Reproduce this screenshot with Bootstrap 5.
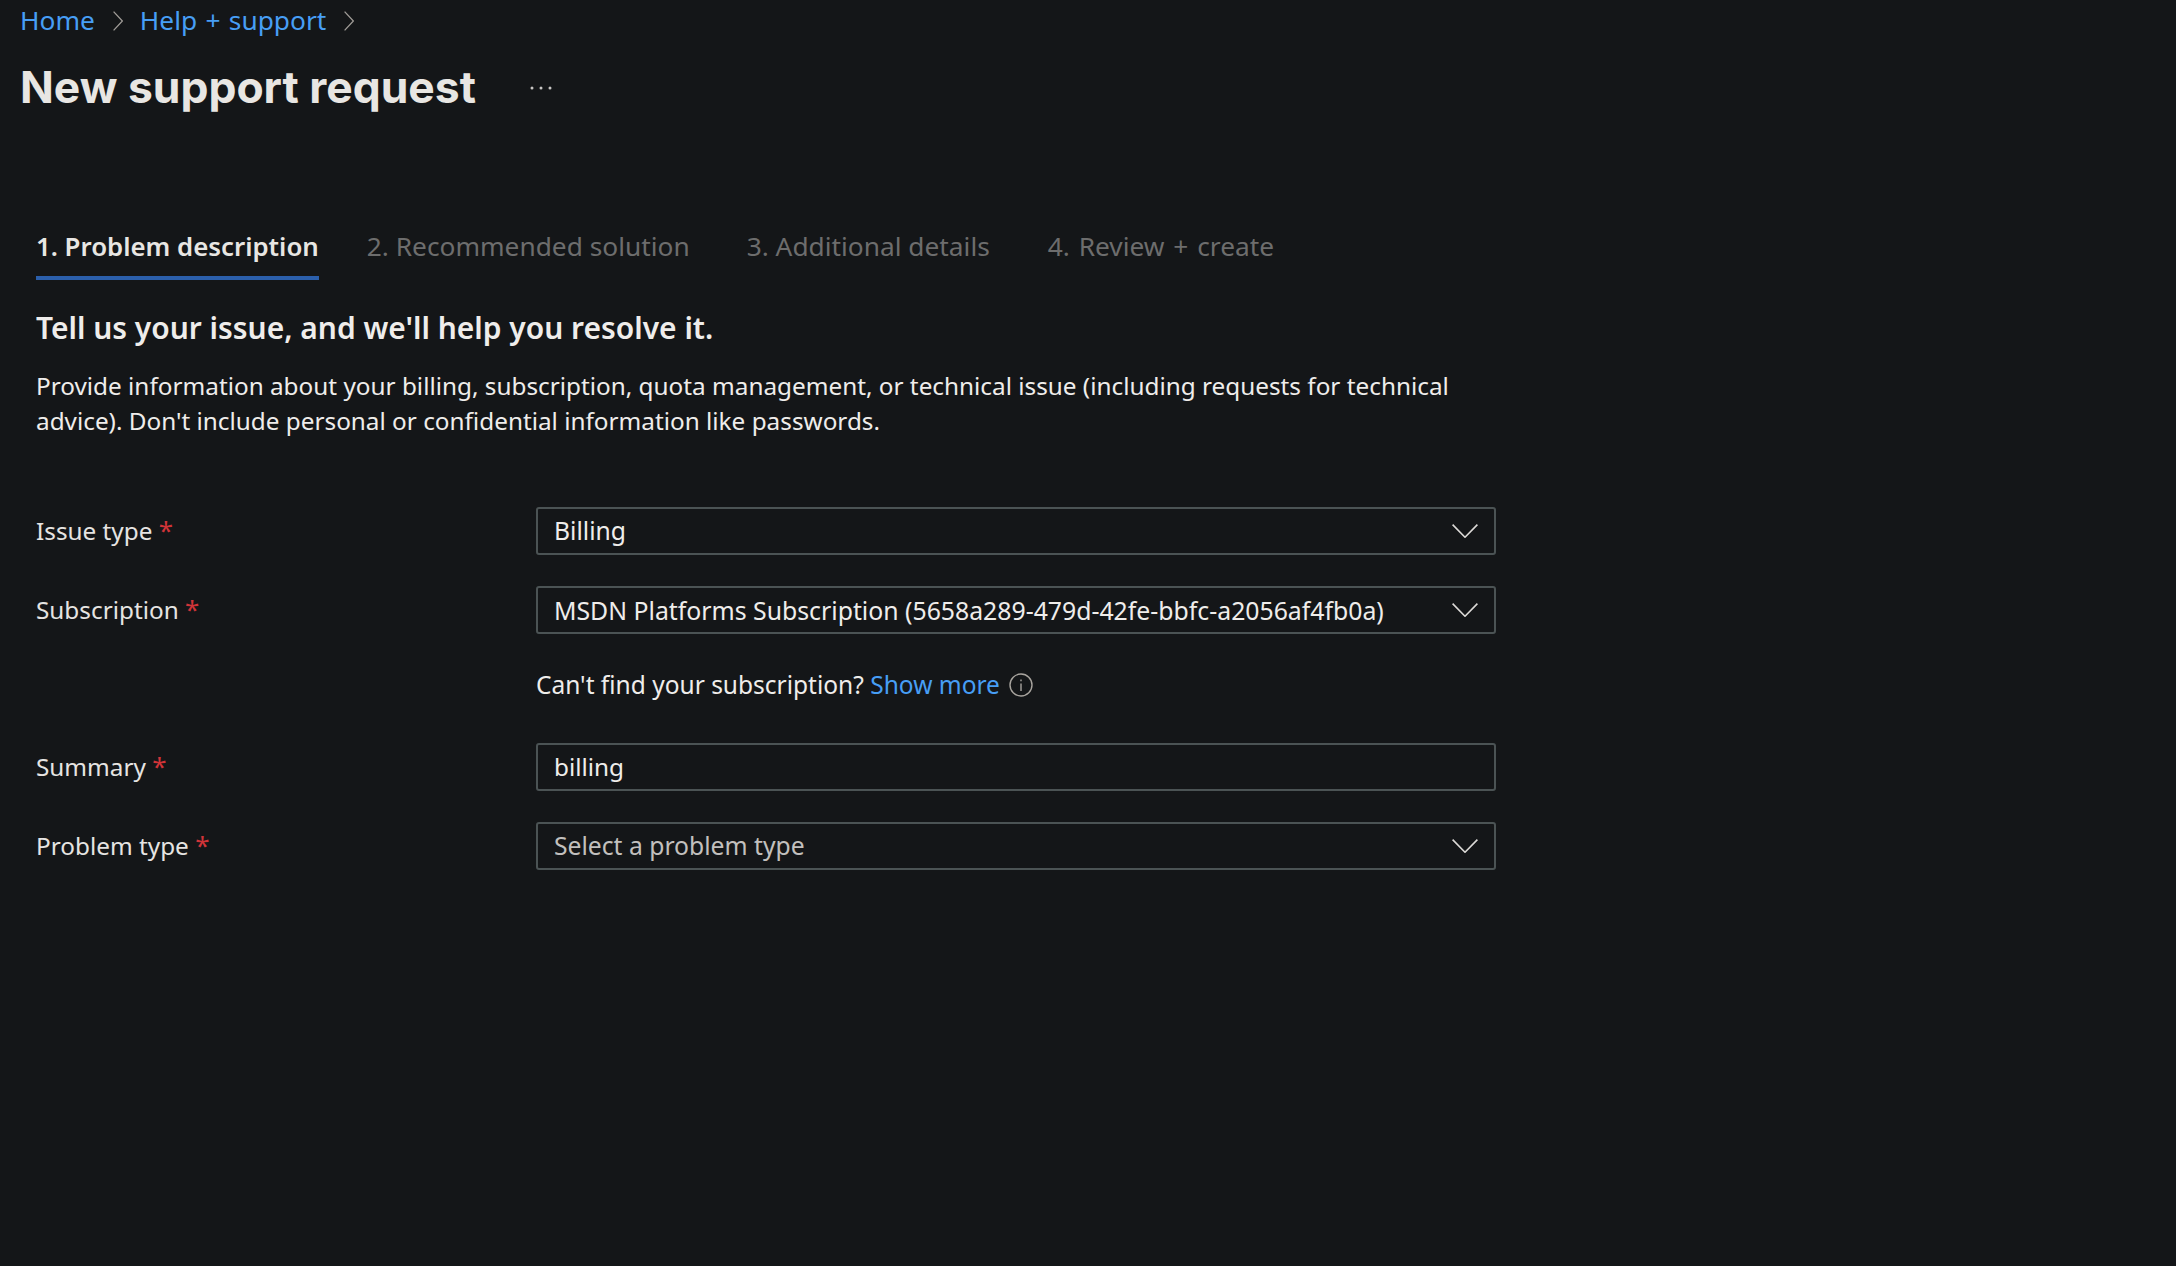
<!DOCTYPE html>
<html lang="en">
<head>
    <meta charset="UTF-8">
    <meta name="viewport" content="width=device-width, initial-scale=1.0">
    <title>New support request</title>
    <link href="https://cdn.jsdelivr.net/npm/bootstrap@5.3.3/dist/css/bootstrap.min.css" rel="stylesheet">
    <style>
        body {
            background-color: #141618;
            color: #efedeb;
            font-family: "Noto Sans", "Open Sans", sans-serif;
            font-size: 24.32px;
            min-height: 100vh;
        }
        a { color: #479ef5; text-decoration: none; }

        /* header */
        .crumbs { padding-left: 20px; height: 42px; font-size: 26.3px; line-height: 40px; word-spacing: 1.5px; }
        .crumbs .breadcrumb { margin: 0; }
        .crumbs .breadcrumb-item { padding-left: 0; display: flex; align-items: center; }
        .crumbs .breadcrumb-item::before { display: none; }
        .crumbs svg { margin: 2px 17px 0 18px; }
        .title-row { padding-left: 20px; margin-top: 15px; height: 60px; }
        .title-row h1 { margin: 0; font-family: Inter, "Noto Sans", sans-serif; font-size: 44.4px; line-height: 60px; font-weight: 700; color: #e8e6e3; }
        .title-row svg { margin-left: 54px; margin-top: 2px; }

        /* wizard tabs */
        .wizard { margin: 112px 0 0 36px; }
        .wizard .nav-link {
            padding: 0 0 13px;
            margin-right: 48px;
            font-size: 26.3px;
            line-height: 34px;
            color: #6d6d6d;
            border-bottom: 4px solid transparent;
        }
        .wizard .nav-link.active { color: #e8e6e3; font-weight: 600; font-size: 25.8px; border-bottom-color: #2b5fab; }
        .wizard .tab-two { margin-right: 57px; }
        .wizard .tab-three { margin-right: 58px; }
        .wizard .tab-four { word-spacing: 2px; }

        /* form */
        .form-area { padding-left: 36px; }
        .form-area h2 { margin: 28px 0 0; font-size: 29.95px; line-height: 40px; font-weight: 600; color: #efedeb; }
        .intro { margin: 21px 0 0; max-width: 1440px; line-height: 34.6px; }
        .field-list { margin-top: 69px; }
        .field-row { height: 48px; margin-bottom: 31px; }
        .field-label { width: 500px; flex: none; margin: 0; color: #e6e4e2; }
        .req { color: #d13438; font-size: 26px; line-height: 1; }
        .form-select, .form-control {
            width: 960px;
            height: 48px;
            padding: 0 60px 0 16px;
            background-color: transparent;
            border: 2px solid #4b5354;
            border-radius: 3px;
            color: #efedeb;
            font-size: 24.32px;
            line-height: 44px;
            box-shadow: none;
        }
        .form-control { padding-bottom: 2px; line-height: 42px; }
        .form-select {
            font-size: 24.7px;
            background-image: url("data:image/svg+xml,%3csvg xmlns='http://www.w3.org/2000/svg' viewBox='0 0 26 14'%3e%3cpath fill='none' stroke='%23dcdad7' stroke-width='1.6' d='M.6.6 13 13.2 25.4.6'/%3e%3c/svg%3e");
            background-position: right 16px center;
            background-size: 26px 14px;
        }
        .form-select.is-empty { color: #c2c0be; }
        .form-select.has-guid { font-size: 24.8px; }
        .help-line { margin: 34px 0 41px 500px; height: 34px; line-height: 34px; font-size: 24.5px; }
        .help-line svg { margin-left: 9px; }
    </style>
</head>
<body>
    <!-- Breadcrumb -->
    <nav class="crumbs" aria-label="breadcrumb">
        <ol class="breadcrumb">
            <li class="breadcrumb-item"><a href="#">Home</a>
                <svg width="10" height="20" viewBox="0 0 10 20"><path d="M.6.6 9.4 10 .6 19.4" fill="none" stroke="#a19d98" stroke-width="1.3"/></svg>
            </li>
            <li class="breadcrumb-item"><a href="#">Help + support</a>
                <svg width="10" height="20" viewBox="0 0 10 20"><path d="M.6.6 9.4 10 .6 19.4" fill="none" stroke="#a19d98" stroke-width="1.3"/></svg>
            </li>
        </ol>
    </nav>

    <div class="title-row d-flex align-items-center">
        <h1>New support request</h1>
        <svg width="22" height="4" viewBox="0 0 22 4" fill="#c8c6c4"><circle cx="2" cy="2" r="1.5"/><circle cx="11" cy="2" r="1.5"/><circle cx="20" cy="2" r="1.5"/></svg>
    </div>

    <!-- Wizard steps -->
    <ul class="nav wizard">
        <li class="nav-item"><a class="nav-link active" href="#">1. Problem description</a></li>
        <li class="nav-item"><a class="nav-link tab-two" href="#">2. Recommended solution</a></li>
        <li class="nav-item"><a class="nav-link tab-three" href="#">3. Additional details</a></li>
        <li class="nav-item"><a class="nav-link tab-four" href="#">4. Review + create</a></li>
    </ul>

    <main class="form-area">
        <h2>Tell us your issue, and we'll help you resolve it.</h2>
        <p class="intro">Provide information about your billing, subscription, quota management, or technical issue (including requests for technical advice). Don't include personal or confidential information like passwords.</p>

        <form class="field-list">
            <div class="field-row d-flex align-items-center">
                <label class="field-label" for="issueType">Issue type <span class="req">*</span></label>
                <select class="form-select" id="issueType"><option>Billing</option></select>
            </div>
            <div class="field-row d-flex align-items-center mb-0">
                <label class="field-label" for="subscription">Subscription <span class="req">*</span></label>
                <select class="form-select has-guid" id="subscription"><option>MSDN Platforms Subscription (5658a289-479d-42fe-bbfc-a2056af4fb0a)</option></select>
            </div>
            <div class="help-line d-flex align-items-center">
                <span>Can't find your subscription?&nbsp;<a href="#">Show more</a></span>
                <svg width="24" height="24" viewBox="0 0 24 24" fill="none" stroke="#a8a49e" stroke-width="1.4"><circle cx="12" cy="12" r="11"/><path d="M12 10.5V18M12 6.5V8.3"/></svg>
            </div>
            <div class="field-row d-flex align-items-center">
                <label class="field-label" for="summary">Summary <span class="req">*</span></label>
                <input class="form-control" id="summary" type="text" value="billing">
            </div>
            <div class="field-row d-flex align-items-center">
                <label class="field-label" for="problemType">Problem type <span class="req">*</span></label>
                <select class="form-select is-empty" id="problemType"><option>Select a problem type</option></select>
            </div>
        </form>
    </main>

    <script src="https://cdn.jsdelivr.net/npm/bootstrap@5.3.3/dist/js/bootstrap.bundle.min.js"></script>
</body>
</html>
